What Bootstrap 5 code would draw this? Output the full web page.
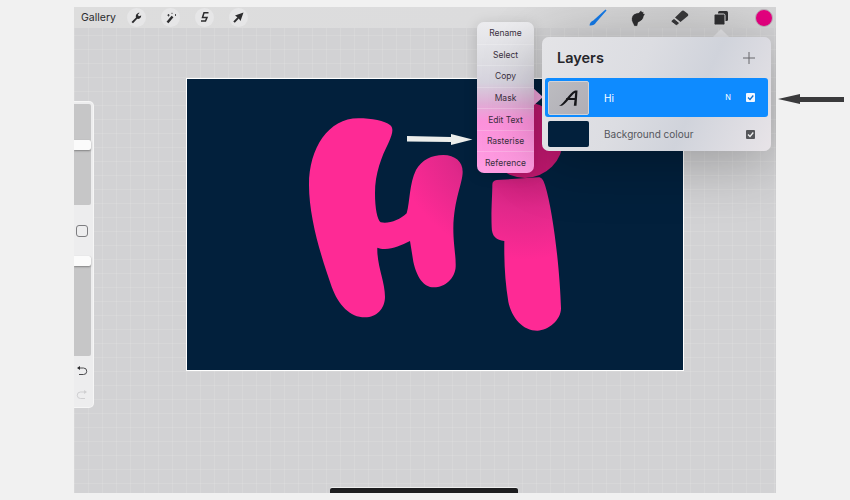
<!DOCTYPE html>
<html lang="en">
<head>
    <meta charset="UTF-8">
    <meta name="viewport" content="width=device-width, initial-scale=1.0">
    <title>Layers panel</title>
    <link href="https://cdn.jsdelivr.net/npm/bootstrap@5.3.0/dist/css/bootstrap.min.css" rel="stylesheet">
    <style>
        body {
            background: #f1f1f1;
            font-family: "Inter", "Liberation Sans", sans-serif;
            width: 850px;
            height: 500px;
            overflow: hidden;
            position: relative;
        }
        .stage {
            width: 702px;
            height: 486px;
            margin: 7px 0 0 74px;
            position: relative;
            overflow: hidden;
            background-color: #d2d2d4;
            background-image:
                linear-gradient(rgba(255,255,255,.1) 1px, transparent 1px),
                linear-gradient(90deg, rgba(255,255,255,.1) 1px, transparent 1px);
            background-size: 14px 14px;
        }
        .topbar {
            height: 21px;
            background: linear-gradient(90deg, #dddddd 0%, #dcdcdd 60%, #cfcfd0 85%, #d6d6d7 100%);
            padding: 0 3px 0 7px;
            position: relative;
        }
        .gallery { font-size: 10.5px; color: #2b2b2d; width: 46px; }
        .tool-round {
            width: 19px;
            height: 19px;
            border-radius: 50%;
            background: #e6e6e7;
            margin-right: 15px;
        }
        .right-tool { width: 41px; }
        .swatch-dot {
            width: 18px;
            height: 18px;
            margin-left: 14px;
            border-radius: 50%;
            background: #e5007f;
            border: 1px solid #b9b9bb;
        }
        .art {
            position: absolute;
            left: 112px;
            top: 71px;
            width: 498px;
            height: 293px;
            background: #02203c;
            border: 1px solid #fff;
        }
        .art svg { display: block; }
        .side-rail {
            position: absolute;
            left: 0;
            top: 95px;
            width: 19px;
            height: 305px;
            background: #ededee;
            border-radius: 0 4px 4px 0;
            box-shadow: 0 0 0 1px #f6f6f6;
        }
        .rail-track {
            position: absolute;
            left: 0;
            width: 17px;
            background: #c6c6c7;
            border-radius: 0 2px 2px 0;
        }
        .rail-grip {
            position: absolute;
            left: 0;
            width: 17px;
            height: 10px;
            background: #fbfbfb;
            border-radius: 0 2px 2px 0;
            box-shadow: 0 1px 2px rgba(0,0,0,.35);
        }
        .rail-square {
            position: absolute;
            left: 2px;
            top: 123px;
            width: 12px;
            height: 12px;
            border: 1px solid #7d7d80;
            border-radius: 3px;
        }
        .action-menu {
            position: absolute;
            left: 403px;
            top: 15px;
            width: 57px;
            border-radius: 7px;
            background: linear-gradient(#ececef 0%, #dedee3 25%, #d6d3de 40%, #e0aed6 54%, #fd92dc 66%, #ff9de2 100%);
            box-shadow: 0 2px 14px rgba(0,0,0,.15);
        }
        .action-menu .list-group-item {
            background: transparent;
            border: 0;
            border-bottom: 1px solid rgba(255,255,255,.22);
            color: #3a3040;
            font-size: 8.5px;
            line-height: 11px;
            padding: 5.2px 0 4.4px;
            text-align: center;
        }
        .action-menu .list-group-item:first-child { padding-top: 6.2px; }
        .action-menu .list-group-item:last-child { border-bottom: 0; }
        .menu-tip {
            position: absolute;
            left: 459px;
            top: 81px;
            width: 0;
            height: 0;
            border-top: 9px solid transparent;
            border-bottom: 9px solid transparent;
            border-left: 10px solid #f4a6dc;
        }
        .layers-panel {
            position: absolute;
            left: 468px;
            top: 30px;
            width: 229px;
            height: 114px;
            border: 0;
            border-radius: 7px;
            background: linear-gradient(115deg, #e4e4e7 0%, #dcdde2 40%, #d0d3db 65%, #e8e4e8 100%);
            box-shadow: 0 10px 60px rgba(0,0,0,.28);
            padding: 0 3px;
        }
        .panel-tip {
            position: absolute;
            left: 639px;
            top: 22px;
            width: 0;
            height: 0;
            border-left: 8px solid transparent;
            border-right: 8px solid transparent;
            border-bottom: 8px solid #e3e3e6;
        }
        .panel-head { height: 41px; padding: 0 13px 0 12px; }
        .panel-title { font-size: 14.5px; font-weight: 600; color: #26262a; }
        .layer-line { padding-right: 13px; font-size: 10px; }
        .layer-hi { height: 39px; background: #0e8bff; color: #fff; border-radius: 3px; padding-left: 3px; }
        .layer-bg { height: 30px; margin-top: 2px; color: #55565c; padding-left: 3px; }
        .thumb-a {
            width: 41px;
            height: 34px;
            background: linear-gradient(135deg, #bcbcc0, #b0aeb6);
            border: 1px solid #d2d2d6;
            border-radius: 2px;
        }
        .thumb-bg {
            width: 41px;
            height: 26px;
            background: #02203c;
            border-radius: 2px;
        }
        .layer-name { margin-left: 15px; }
        .layer-hi .layer-name { padding-top: 2px; }
        .layer-n { font-size: 7.5px; margin-right: 15px; }
        .tick-box { width: 9px; height: 9px; border-radius: 1px; }
        .tick-on { background: #f2f7ff; }
        .tick-off { background: #55565a; }
        .home-bar {
            position: absolute;
            left: 256px;
            top: 481px;
            width: 188px;
            height: 5px;
            background: #1d1d1f;
            border-radius: 2px 2px 0 0;
            box-shadow: 0 -1px 0 #eee;
        }
        .note-arrow { position: absolute; }
    </style>
</head>
<body>
    <div class="stage">
        <div class="art">
            <svg width="496" height="291" viewBox="187 79 496 291">
                <defs>
                    <!-- coordinates of the scaled group below -->
                    <radialGradient id="panelShade" gradientUnits="userSpaceOnUse" cx="705" cy="60" r="405">
                        <stop offset=".3" stop-color="#bd1c72"/>
                        <stop offset=".62" stop-color="#e0288a"/>
                        <stop offset="1" stop-color="#fe2a95"/>
                    </radialGradient>
                </defs>
                <circle cx="525" cy="140" r="38" fill="#c0186f"/>
                <g transform="translate(290 105) scale(.33333)" fill="url(#panelShade)">
                    <path d="M205 40C245 40 285 48 300 60C312 70 308 85 295 115C275 155 255 205 255 265C255 310 262 345 272 352C295 358 330 345 350 325C360 290 358 235 378 195C395 165 425 150 460 150C495 150 518 170 518 200C518 235 492 280 490 370C490 420 498 450 497 485C495 520 465 547 432 547C400 547 380 515 370 470L360 408C335 420 310 432 285 432C275 432 268 430 262 428C260 480 285 530 285 575C285 610 260 637 225 637C180 637 145 600 125 545C95 460 57 340 57 240C57 130 115 40 205 40Z"/>
                    <path d="M620 225L745 217C755 217 760 225 765 240C790 320 810 500 813 610C813 645 775 677 742 677C700 677 665 640 655 590C645 530 642 470 643 408C620 405 605 395 605 365C603 320 607 270 607 240C607 230 612 226 620 225Z"/>
                </g>
                <path d="M407 136L451 137V134L472.500 139.500L451 145V142L407 141.500Z" fill="#eceeec"/>
            </svg>
        </div>

        <div class="topbar d-flex align-items-center">
            <div class="gallery">Gallery</div>
            <div class="tool-round d-flex align-items-center justify-content-center">
                <svg width="13" height="13" viewBox="0 0 13 13"><path d="M1.500 11L6 6.500C5.300 4.200 6.800 1.800 9.600 1.800L7.800 3.700L8.800 5.300L11.200 4.500C11.200 7 9 8.300 7.200 7.800L3 12.300Z" fill="#2c2c2e"/></svg>
            </div>
            <div class="tool-round d-flex align-items-center justify-content-center">
                <svg width="12" height="12" viewBox="0 0 12 12"><path d="M2.500 10.500L7.500 4.500" stroke="#2c2c2e" stroke-width="2.400"/><path d="M3.500 2V4.500M2.300 3.200H4.700M7 .8V2M10.500 2V4" stroke="#2c2c2e" stroke-width=".8"/></svg>
            </div>
            <div class="tool-round d-flex align-items-center justify-content-center">
                <svg width="14" height="14" viewBox="0 0 14 14"><path d="M10.500 1.800H6L4.500 6.500H9L7.500 10H3" fill="none" stroke="#2c2c2e" stroke-width="1.500"/></svg>
            </div>
            <div class="tool-round d-flex align-items-center justify-content-center">
                <svg width="13" height="13" viewBox="0 0 13 13"><path d="M11.500 1.500L8.500 10L6.800 7.600L2.800 11.800L1.300 10.500L5.400 6.300L3 4.600Z" fill="#2c2c2e"/></svg>
            </div>
            <div class="ms-auto d-flex align-items-center">
                <div class="right-tool d-flex justify-content-center">
                    <svg width="18" height="17" viewBox="0 0 18 17"><path d="M.5 16.500C.8 14 2.200 12.300 4.300 11.500L16.500 .5L17.500 1.500L7 13.500C6 15.800 3.500 16.800 .5 16.500Z" fill="#1479e6"/></svg>
                </div>
                <div class="right-tool d-flex justify-content-center">
                    <svg width="17" height="18" viewBox="0 0 17 18"><path d="M4 17.300C3.500 14.500 1.200 13 1.500 9.500C1.800 6.500 4 4.500 6.500 4L9 3.500L11 1L12 2.800L14 2.500L13.500 4.500L15.500 4.500L14 7L13.500 9C12.500 11 10 13 8.300 13.500L7.500 17.300Z" fill="#2d2d2f" stroke="#eee" stroke-width=".6"/></svg>
                </div>
                <div class="right-tool d-flex justify-content-center">
                    <svg width="19" height="16" viewBox="0 0 19 16"><path d="M11.500 1.200C12.500 .3 13.500 .3 14.500 1.200L17.500 3.500C18.500 4.500 18.500 5.500 17.500 6.300L10.500 12L5 7.500Z" fill="#38383a"/><path d="M4 8.500L9.500 13L7.500 15C7 15.500 6 15.500 5.500 15L1.500 12C1 11.500 1 11 1.500 10.500Z" fill="#38383a" stroke="#f4f4f4" stroke-width=".6"/></svg>
                </div>
                <div class="right-tool d-flex justify-content-center">
                    <svg width="16" height="16" viewBox="0 0 16 16"><rect x="5" y="1" width="10" height="10" rx="1.500" fill="#2f2f31"/><rect x="1" y="4" width="11" height="11" rx="1.500" fill="#2f2f31" stroke="#d8d8d9"/></svg>
                </div>
                <div class="swatch-dot"></div>
            </div>
        </div>

        <div class="side-rail">
            <div class="rail-track" style="top:2px;height:101px"></div>
            <div class="rail-grip" style="top:38px"></div>
            <div class="rail-square"></div>
            <div class="rail-track" style="top:154px;height:100px"></div>
            <div class="rail-grip" style="top:154px"></div>
            <svg class="note-arrow" style="left:2px;top:263px" width="12" height="12" viewBox="0 0 12 12"><path d="M2.500 3H7.500A3 3 0 0 1 7.500 9.500H3" fill="none" stroke="#4c4c4f" stroke-width="1"/><path d="M1 3L4 1V5Z" fill="#2b2b2d"/></svg>
            <svg class="note-arrow" style="left:2px;top:287px" width="12" height="12" viewBox="0 0 12 12"><path d="M9.500 3H4.500A3 3 0 0 0 4.500 9.500H9" fill="none" stroke="#cfcfd1" stroke-width="1"/><path d="M11 3L8 1V5Z" fill="#cfcfd1"/></svg>
        </div>

        <div class="menu-tip"></div>
        <div class="list-group action-menu">
            <div class="list-group-item">Rename</div>
            <div class="list-group-item">Select</div>
            <div class="list-group-item">Copy</div>
            <div class="list-group-item">Mask</div>
            <div class="list-group-item">Edit Text</div>
            <div class="list-group-item">Rasterise</div>
            <div class="list-group-item">Reference</div>
        </div>

        <div class="panel-tip"></div>
        <div class="card layers-panel">
            <div class="panel-head d-flex align-items-center justify-content-between">
                <span class="panel-title">Layers</span>
                <svg width="12" height="12" viewBox="0 0 12 12"><path d="M6 0V12M0 6H12" stroke="#66666a" stroke-width="1"/></svg>
            </div>
            <div class="layer-line layer-hi d-flex align-items-center">
                <div class="thumb-a d-flex align-items-center justify-content-center">
                    <svg width="22" height="18" viewBox="0 0 22 18"><path d="M1 16.800C6 15 11 4 17 1.500H19.500L18.500 16.800H15.800L16.500 11H8.500L8 9H16.700L17.200 3.800C13 6 9 14.500 4 16.800Z" fill="#16161a"/></svg>
                </div>
                <span class="layer-name">Hi</span>
                <span class="layer-n ms-auto">N</span>
                <svg class="tick-box tick-on" viewBox="0 0 9 9"><path d="M2 4.500L4 6.500L7.300 2.500" fill="none" stroke="#0e6fd0" stroke-width="1.300"/></svg>
            </div>
            <div class="layer-line layer-bg d-flex align-items-center">
                <div class="thumb-bg"></div>
                <span class="layer-name">Background colour</span>
                <svg class="tick-box tick-off ms-auto" viewBox="0 0 9 9"><path d="M2 4.500L4 6.500L7.300 2.500" fill="none" stroke="#f0f0f0" stroke-width="1.300"/></svg>
            </div>
        </div>

        <div class="home-bar"></div>
    </div>

    <svg class="note-arrow" style="left:778px;top:90px" width="68" height="18" viewBox="0 0 68 18"><path d="M0 9L22 4V7H66V12H22V14Z" fill="#3a3a3c"/></svg>

    <script src="https://cdn.jsdelivr.net/npm/bootstrap@5.3.0/dist/js/bootstrap.bundle.min.js"></script>
</body>
</html>
